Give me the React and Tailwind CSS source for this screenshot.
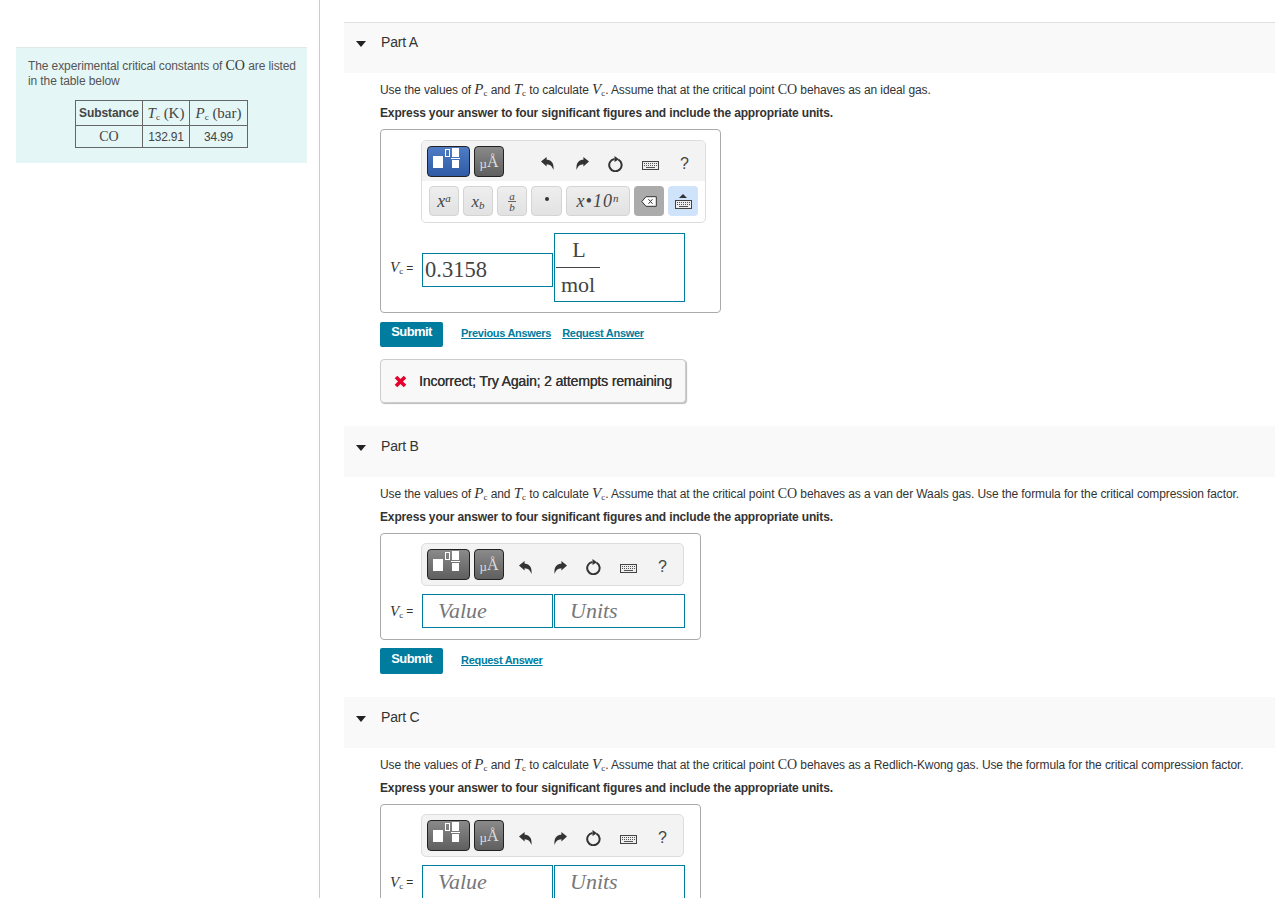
import { Fragment } from 'react';

const sans = { fontFamily: '"Liberation Sans", Arial, sans-serif' };

function V({ name }) {
    return (
        <span className="font-['Liberation_Serif',serif] text-[15px] leading-none tracking-normal italic text-[#333]">
            {name}
            <sub className="text-[9px] not-italic leading-none">c</sub>
        </span>
    );
}

function Co() {
    return <span className="font-['Liberation_Serif',serif] text-[14px] leading-none tracking-normal text-[#333]">CO</span>;
}

function TemplateButton({ active }) {
    return (
        <button type="button" className={`relative h-[31px] w-[43px] rounded-[4px] border border-[#222] ${active ? 'bg-gradient-to-b from-[#4f7cc4] to-[#2f5ba6]' : 'bg-gradient-to-b from-[#8a8a8a] to-[#5f5f5f]'}`}>
            <span className="absolute left-[5px] top-[9px] h-[12px] w-[10px] bg-white" />
            <span className="absolute left-[17px] top-[2px] h-[8px] w-[5px] border border-white" />
            <span className="absolute left-[24px] top-[1px] h-[9px] w-[7px] bg-white" />
            <span className="absolute left-[23px] top-[11px] h-px w-[9px] bg-white" />
            <span className="absolute left-[24px] top-[13px] h-[8px] w-[7px] bg-white" />
        </button>
    );
}

function SymbolButton() {
    return (
        <button type="button" className="ml-[4px] flex h-[31px] w-[30px] items-end justify-center rounded-[4px] border border-[#222] bg-gradient-to-b from-[#8a8a8a] to-[#5f5f5f] pb-[6px] font-['Liberation_Serif',serif] leading-none text-[#dddddd]">
            <span className="text-[13px]">µ</span>
            <span className="text-[16px]">Å</span>
        </button>
    );
}

function KeyboardIcon({ className }) {
    return (
        <svg className={className} width="17" height="9" viewBox="0 0 17 9">
            <rect x="0.5" y="0.5" width="16" height="8" fill="#eee" stroke="#444" />
            <path d="M2 2.5h13M2 4.5h13" stroke="#555" strokeDasharray="1 1" />
            <path d="M4 6.5h9" stroke="#555" />
        </svg>
    );
}

function ToolIcons({ first }) {
    return (
        <span className="mt-[5px] flex items-center">
            <svg className={first} width="13" height="13" viewBox="0 0 13 13">
                <path d="M0 4.6 L5.6 0 V2.8 C10 2.8 13.4 6 12.4 13 C11.4 9.6 9.4 7.4 5.6 7.3 V9.6 Z" fill="#333" />
            </svg>
            <svg className="ml-[22px]" width="13" height="13" viewBox="0 0 13 13">
                <path d="M13 4.6 L7.4 0 V2.8 C3 2.8 -0.4 6 0.6 13 C1.6 9.6 3.6 7.4 7.4 7.3 V9.6 Z" fill="#333" />
            </svg>
            <svg className="ml-[19px]" width="15" height="16" viewBox="0 0 15 16">
                <path d="M10.4 3.6 A6.2 6.2 0 1 1 6.5 2.9" fill="none" stroke="#333" strokeWidth="2" />
                <path d="M6.5 0 L11 3.2 L6.5 6 Z" fill="#333" />
            </svg>
            <KeyboardIcon className="ml-[19px] mt-[3px]" />
            <span className="ml-[21px] text-[16px] text-[#444]">?</span>
        </span>
    );
}

function KeyButton({ w, children }) {
    return (
        <div className={`flex h-[30px] ${w} items-center justify-center rounded-[4px] border border-[#d4d4d4] bg-gradient-to-b from-[#eeeeee] to-[#e2e2e2] font-['Liberation_Serif',serif] italic text-[#444]`}>
            {children}
        </div>
    );
}

function Toolbar() {
    return (
        <div className="ml-[40px] w-[285px] overflow-hidden rounded-[5px] border border-[#dddddd] bg-white">
            <div className="flex h-[40px] items-center bg-[#f3f3f3] pl-[5px]">
                <TemplateButton active />
                <SymbolButton />
                <ToolIcons first="ml-[37px]" />
            </div>
            <div className="flex items-center gap-[4px] pt-[5px] pb-[6px] pl-[7px]">
                <KeyButton w="w-[30px]"><span className="text-[18px] leading-none">x<sup className="text-[11px]">a</sup></span></KeyButton>
                <KeyButton w="w-[30px]"><span className="text-[17px] leading-none">x<sub className="text-[11px]">b</sub></span></KeyButton>
                <KeyButton w="w-[30px]">
                    <span className="flex flex-col items-center text-[11px] leading-[10px]">
                        <span className="border-b border-[#666] px-[1px]">a</span>
                        <span>b</span>
                    </span>
                </KeyButton>
                <KeyButton w="w-[31px]"><span className="mb-[4px] h-[4px] w-[4px] rounded-full bg-[#333]" /></KeyButton>
                <KeyButton w="w-[64px]"><span className="text-[18px] leading-none tracking-[1px]">x•10<sup className="text-[11px]">n</sup></span></KeyButton>
                <div className="flex h-[30px] w-[30px] items-center justify-center rounded-[4px] bg-[#ababab]">
                    <svg width="16" height="11" viewBox="0 0 16 11">
                        <path d="M5 0.7 H15.3 V10.3 H5 L0.8 5.5 Z" fill="#fff" stroke="#333" />
                        <path d="M7.5 3.2 L11.5 7.8 M11.5 3.2 L7.5 7.8" stroke="#333" />
                    </svg>
                </div>
                <div className="flex h-[30px] w-[30px] flex-col items-center justify-center gap-[2px] rounded-[4px] bg-[#cfe3fb]">
                    <span className="h-0 w-0 border-x-[4px] border-b-[4px] border-x-transparent border-b-[#333]" />
                    <KeyboardIcon />
                </div>
            </div>
        </div>
    );
}

function SmallToolbar() {
    return (
        <div className="ml-[40px] flex h-[43px] w-[263px] items-center rounded-[5px] border border-[#dddddd] bg-[#f3f3f3] pl-[5px]">
            <TemplateButton />
            <SymbolButton />
            <ToolIcons first="ml-[15px]" />
        </div>
    );
}

function AnswerLabel() {
    return (
        <div className="flex w-[41px] shrink-0 items-center pl-[9px] text-[12px] text-[#333]">
            <V name="V" />
            <span className="ml-[3px]">=</span>
        </div>
    );
}

function AnswerRow() {
    return (
        <div className="flex items-center">
            <AnswerLabel />
            <div className="flex h-[34px] w-[131px] items-center border border-[#007c9e] pb-[2px] pl-[15px] font-['Liberation_Serif',serif] text-[22px] italic text-[#777]">Value</div>
            <div className="ml-px flex h-[34px] w-[131px] items-center border border-[#007c9e] pb-[2px] pl-[15px] font-['Liberation_Serif',serif] text-[22px] italic text-[#777]">Units</div>
        </div>
    );
}

function SubmitButton({ h }) {
    return (
        <button type="button" className={`${h} w-[63px] rounded-[2px] bg-[#007c9e] text-[13px] font-bold tracking-[-0.6px] text-white`}>
            Submit
        </button>
    );
}

function Link({ children }) {
    return <a className="text-[11px] font-bold tracking-[-0.3px] text-[#007c9e] underline">{children}</a>;
}

function PartHeader({ label, box }) {
    return (
        <div className={`flex bg-[#f9f9f9] ${box}`}>
            <span className="ml-[12px] mt-[7px] h-0 w-0 border-x-[5px] border-t-[6px] border-x-transparent border-t-[#222]" />
            <span className="ml-[15px] text-[14px] leading-[16px] tracking-[-0.2px] text-[#333]">{label}</span>
        </div>
    );
}

function Question({ ending }) {
    return (
        <Fragment>
            <p className="mt-[9px] h-[16px] text-[12px] leading-[16px] tracking-[-0.1px] whitespace-nowrap text-[#333]">
                Use the values of <V name="P" /> and <V name="T" /> to calculate <V name="V" />. Assume that at the critical point <Co /> {ending}
            </p>
            <p className="mt-[7px] h-[16px] text-[12px] leading-[16px] font-bold tracking-[-0.145px] whitespace-nowrap text-[#333]">
                Express your answer to four significant figures and include the appropriate units.
            </p>
        </Fragment>
    );
}

export default function App() {
    return (
        <div className="flex h-[898px] overflow-hidden bg-white" style={sans}>
            {/* Left column with the data table */}
            <aside className="w-[320px] shrink-0 border-r border-[#cccccc] pt-[47px] pl-[16px]">
                <div className="h-[116px] w-[291px] border-t border-[#e0e8e8] bg-[#e5f6f6] pr-[8px] pl-[12px] pt-[11px]">
                    <p className="text-[12px] leading-[15px] tracking-[-0.1px] text-[#555]">
                        The experimental critical constants of <Co /> are listed<br />in the table below
                    </p>
                    <table className="mt-[11px] ml-[47px] border-collapse text-center text-[12px] text-[#444]">
                        <tbody>
                            <tr className="h-[25px]">
                                <td className="w-[67px] border border-[#666] text-[12px] font-bold tracking-[-0.1px] text-[#444]">Substance</td>
                                <td className="w-[47px] border border-[#666]"><span className="font-['Liberation_Serif',serif] text-[15px] whitespace-nowrap"><i>T</i><sub className="text-[9px]">c</sub> (K)</span></td>
                                <td className="w-[58px] border border-[#666]"><span className="font-['Liberation_Serif',serif] text-[15px] whitespace-nowrap"><i>P</i><sub className="text-[9px]">c</sub> (bar)</span></td>
                            </tr>
                            <tr className="h-[21px]">
                                <td className="border border-[#666]"><span className="font-['Liberation_Serif',serif] text-[14px]">CO</span></td>
                                <td className="border border-[#666] tracking-[-0.2px]">132.91</td>
                                <td className="border border-[#666] tracking-[-0.2px]">34.99</td>
                            </tr>
                        </tbody>
                    </table>
                </div>
            </aside>

            <main className="min-w-0 flex-1 pt-[22px] pl-[24px]">
                {/* Part A */}
                <div className="border-t border-[#e0e0e0]">
                    <PartHeader label="Part A" box="h-[50px] pt-[11px]" />
                </div>
                <div className="pl-[36px]">
                    <Question ending="behaves as an ideal gas." />
                    <div className="mt-[8px] h-[184px] w-[341px] rounded-[4px] border border-[#aaaaaa] pt-[10px]">
                        <Toolbar />
                        <div className="mt-[10px] flex items-center">
                            <AnswerLabel />
                            <div className="mt-[4px] flex h-[34px] w-[131px] items-center border border-[#007c9e] pl-[2px] font-['Liberation_Serif',serif] text-[22.5px] text-[#444]">0.3158</div>
                            <div className="ml-px h-[69px] w-[131px] border border-[#007c9e] pl-[1px] font-['Liberation_Serif',serif] text-[22px] leading-none text-[#444]">
                                <div className="flex w-[44px] flex-col items-center">
                                    <span className="mt-[5px] ml-[2px] h-[28px]">L</span>
                                    <span className="h-px w-full bg-[#444]" />
                                    <span className="mt-[6px]">mol</span>
                                </div>
                            </div>
                        </div>
                    </div>
                    <div className="mt-[9px] flex items-center">
                        <SubmitButton h="h-[25px] pb-[6px]" />
                        <span className="ml-[18px] -mt-[6px]"><Link>Previous Answers</Link></span>
                        <span className="ml-[11px] -mt-[6px]"><Link>Request Answer</Link></span>
                    </div>
                    <div className="mt-[12px] flex h-[44px] w-[306px] items-center rounded-[4px] border border-[#cccccc] bg-[#f8f8f8] pl-[13px] shadow-[1px_1px_1px_#bbbbbb]">
                        <svg width="13" height="13" viewBox="0 0 13 13">
                            <path d="M2 2 L11 11 M11 2 L2 11" stroke="#e4002b" strokeWidth="3.6" />
                        </svg>
                        <span className="ml-[12px] text-[14px] tracking-[-0.15px] whitespace-nowrap text-[#333] [text-shadow:0.2px_0_0_#333]">Incorrect; Try Again; 2 attempts remaining</span>
                    </div>
                </div>

                {/* Part B */}
                <div className="mt-[23px]">
                    <PartHeader label="Part B" box="h-[51px] pt-[12px]" />
                </div>
                <div className="pl-[36px]">
                    <Question ending="behaves as a van der Waals gas. Use the formula for the critical compression factor." />
                    <div className="mt-[8px] h-[107px] w-[321px] rounded-[4px] border border-[#aaaaaa] pt-[9px]">
                        <SmallToolbar />
                        <div className="mt-[8px]"><AnswerRow /></div>
                    </div>
                    <div className="mt-[8px] flex items-center">
                        <SubmitButton h="h-[26px] pb-[4px]" />
                        <span className="ml-[18px] -mt-[4px]"><Link>Request Answer</Link></span>
                    </div>
                </div>

                {/* Part C */}
                <div className="mt-[23px]">
                    <PartHeader label="Part C" box="h-[51px] pt-[12px]" />
                </div>
                <div className="pl-[36px]">
                    <Question ending="behaves as a Redlich-Kwong gas. Use the formula for the critical compression factor." />
                    <div className="mt-[8px] h-[107px] w-[321px] rounded-[4px] border border-[#aaaaaa] pt-[9px]">
                        <SmallToolbar />
                        <div className="mt-[8px]"><AnswerRow /></div>
                    </div>
                </div>
            </main>
        </div>
    );
}
